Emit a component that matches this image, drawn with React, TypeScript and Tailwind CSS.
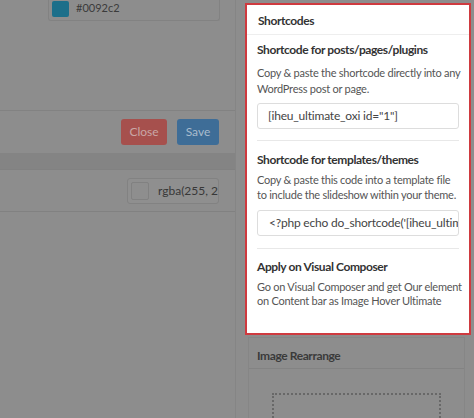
import React from "react";

export default function App() {
  const font = { fontFamily: 'Lato, "Noto Sans", sans-serif' };
  const body = "text-[11px] text-[#555] tracking-[-0.25px] whitespace-nowrap";
  const head = "text-[12px] font-bold text-[#333] leading-[18px] whitespace-nowrap tracking-[-0.4px]";
  return (
    <div className="w-[474px] h-[418px] overflow-hidden bg-[#8d8d8d] flex" style={font}>
      {/* Left dimmed area */}
      <div className="w-[236px] h-full flex flex-col border-r border-[#858585]">
        <div className="h-[111px] flex flex-col border-b border-[#828282]">
          <div className="ml-[48px] w-[172px] h-[21px] border border-t-0 border-[#828282] rounded-b-[3px] flex items-center pl-[3px]">
            <div className="w-[17px] h-[16px] bg-[#1c6f8a] rounded-[2px] -mt-[2px]" />
            <span className="ml-[7px] text-[11px] text-[#3b3b3b] -mt-[3px]">#0092c2</span>
          </div>
        </div>
        <div className="h-[42px] flex justify-end items-center gap-[10px] pr-[16px]">
          <div className="w-[46px] h-[26px] rounded-[3px] bg-[#a6504d] text-[#c9a7a6] text-[12px] flex items-center justify-center">Close</div>
          <div className="w-[42px] h-[26px] rounded-[3px] bg-[#3e6d97] text-[#a9bccd] text-[12px] flex items-center justify-center">Save</div>
        </div>
        <div className="h-[17px] bg-[#848484] border-b border-[#818181]" />
        <div className="h-[42px] flex justify-end items-center pr-[16px] border-b border-[#818181]">
          <div className="w-[92px] h-[26px] rounded-[3px] border border-[#828282] bg-[#8f8f8f] flex items-center pl-[3px] overflow-hidden">
            <div className="w-[18px] h-[18px] shrink-0 border border-[#818181] bg-[#8e8e8e] rounded-[2px]" />
            <span className="ml-[9px] text-[12px] text-[#383838] whitespace-nowrap">rgba(255, 2</span>
          </div>
        </div>
        <div className="flex-1" />
      </div>

      {/* Right column */}
      <div className="flex-1 flex flex-col pl-[9px] pr-[3px] pt-[3px]">
        <div className="border-[2px] border-[#cf3a3f] bg-white w-[226px]">
          <div className="h-[30px] pt-[3px] flex items-center px-[11px] border-b border-[#eeeeee]">
            <span className="text-[12px] font-bold text-[#333] tracking-[-0.4px]">Shortcodes</span>
          </div>
          <div className="px-[10px] pt-[6px]">
            <div className={head}>Shortcode for posts/pages/plugins</div>
            <p className={`mt-[6px] leading-[15.5px] ${body}`}>Copy &amp; paste the shortcode directly into any<br />WordPress post or page.</p>
            <div className="mt-[7px] h-[26px] border border-[#dddddd] rounded-[3px] flex items-center pl-[10px] text-[12px] text-[#444] whitespace-nowrap overflow-hidden tracking-[-0.2px]">[iheu_ultimate_oxi id="1"]</div>
            <div className="mt-[11px] border-t border-[#e8e8e8]" />
            <div className={`mt-[10px] ${head}`}>Shortcode for templates/themes</div>
            <p className={`mt-[4px] leading-[14.5px] ${body}`}>Copy &amp; paste this code into a template file<br />to include the slideshow within your theme.</p>
            <div className="mt-[8px] h-[26px] border border-[#dddddd] rounded-[3px] flex items-center pl-[11px] text-[12px] text-[#444] whitespace-nowrap overflow-hidden tracking-[-0.2px]">&lt;?php echo do_shortcode('[iheu_ultimate_oxi id="1"]'); ?&gt;</div>
            <div className="mt-[12px] border-t border-[#e8e8e8]" />
            <div className={`mt-[9px] ${head}`}>Apply on Visual Composer</div>
            <p className={`mt-[4px] pb-[25px] leading-[14px] ${body}`}>Go on Visual Composer and get Our element<br />on Content bar as Image Hover Ultimate</p>
          </div>
        </div>
        <div className="mt-[2px] ml-[3px] w-[217px] flex-1 border border-[#868686] border-b-0">
          <div className="h-[31px] pt-[5px] flex items-center px-[8px] border-b border-[#838383]">
            <span className="text-[12px] font-bold text-[#3a3a3a] tracking-[-0.4px]">Image Rearrange</span>
          </div>
          <div className="mt-[24px] mx-[23px] h-[40px] border-[2px] border-dotted border-b-0 border-[#686868]" />
        </div>
      </div>
    </div>
  );
}
